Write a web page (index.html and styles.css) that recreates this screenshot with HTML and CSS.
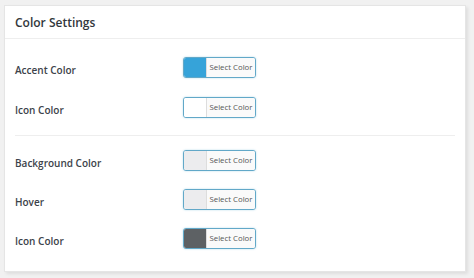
FILE: index.html
```html
<!DOCTYPE html>
<html lang="en">
<head>
<meta charset="UTF-8">
<title>Color Settings</title>
<link rel="stylesheet" href="styles.css">
</head>
<body>
<div class="panel">
    <div class="panel-header">Color Settings</div>
    <div class="section first">
        <div class="row">
            <div class="label">Accent Color</div>
            <button class="picker"><span class="swatch accent"></span><span class="picker-text">Select Color</span></button>
        </div>
        <div class="row">
            <div class="label">Icon Color</div>
            <button class="picker"><span class="swatch white"></span><span class="picker-text">Select Color</span></button>
        </div>
    </div>
    <div class="section second">
        <div class="row">
            <div class="label">Background Color</div>
            <button class="picker"><span class="swatch light"></span><span class="picker-text">Select Color</span></button>
        </div>
        <div class="row">
            <div class="label">Hover</div>
            <button class="picker"><span class="swatch light"></span><span class="picker-text">Select Color</span></button>
        </div>
        <div class="row">
            <div class="label">Icon Color</div>
            <button class="picker"><span class="swatch dark"></span><span class="picker-text">Select Color</span></button>
        </div>
    </div>
</div>
</body>
</html>
```

FILE: styles.css
```css
body, html {
    margin: 0;
    height: 100%;
    background-color: #f1f1f1;
    font-family: "Open Sans", Arial, sans-serif;
}
body {
    padding: 5px 4px;
    box-sizing: border-box;
}
.panel {
    width: 462px;
    height: 267px;
    box-sizing: border-box;
    background: #fff;
    border: 1px solid #e5e5e5;
    box-shadow: 2px 2px 3px rgba(0,0,0,0.08);
}
.panel-header {
    height: 32px;
    line-height: 34px;
    padding: 0 10px;
    font-size: 12px;
    font-weight: 600;
    color: #32373c;
    border-bottom: 1px solid #eeeeee;
}
.section {
    margin: 0 10px;
    display: flex;
    flex-direction: column;
}
.section.first {
    padding: 18px 0 17px;
    gap: 19px;
    border-bottom: 1px solid #eeeeee;
}
.section.second {
    padding-top: 14px;
    gap: 18px;
}
.row {
    display: grid;
    grid-template-columns: 168px auto;
    align-items: center;
    height: 21px;
}
.label {
    font-size: 10px;
    font-weight: 600;
    color: #3c434a;
    padding-top: 5px;
}
.picker {
    display: flex;
    align-items: stretch;
    width: 73px;
    height: 21px;
    padding: 0;
    margin: 0;
    box-sizing: border-box;
    border: 1px solid #62a8c8;
    border-radius: 3px;
    background: #fff;
    box-shadow: 0 0 2px rgba(30,140,190,0.35);
    overflow: hidden;
    cursor: pointer;
}
.swatch {
    width: 22px;
    border-right: 1px solid #dddddd;
}
.swatch.accent { background: #36a3d9; }
.swatch.white { background: #ffffff; }
.swatch.light { background: #ececee; }
.swatch.dark { background: #5d6164; }
.picker-text {
    flex: 1;
    font-family: "Open Sans", Arial, sans-serif;
    font-size: 7.8px;
    line-height: 19px;
    color: #555;
    text-align: center;
    background: #fafafa;
}
```
